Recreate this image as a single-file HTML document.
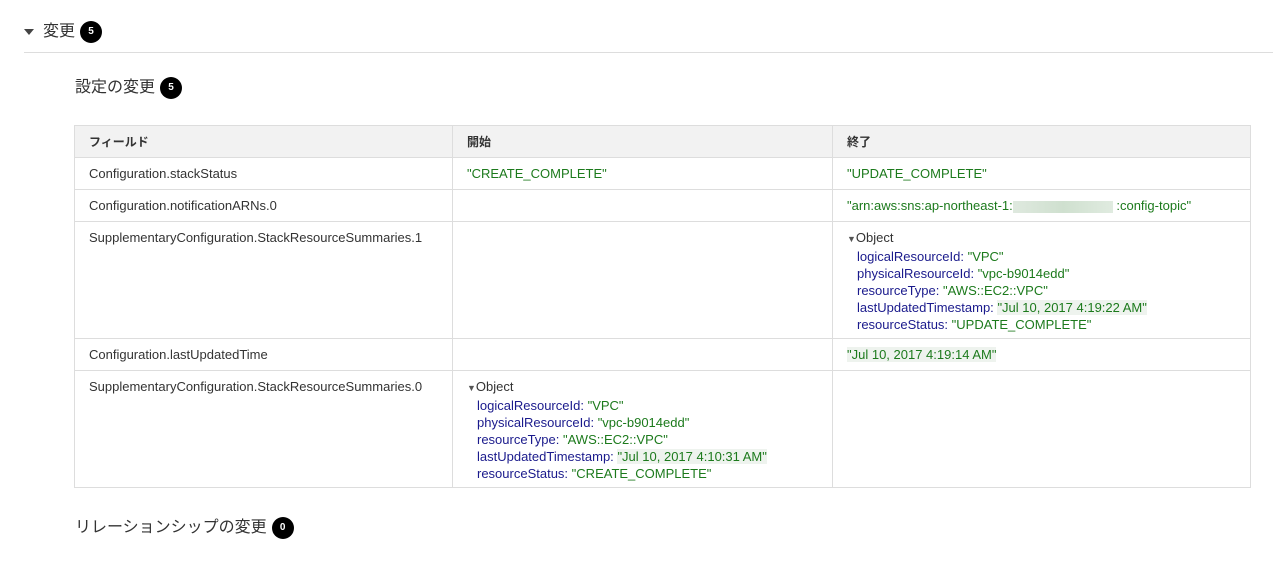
<!DOCTYPE html>
<html><head><meta charset="utf-8"><style>
body{margin:0;background:#fff;font-family:"Liberation Sans","Noto Sans CJK JP",sans-serif;color:#333;width:1273px;height:562px;overflow:hidden;position:relative}
.badge{display:inline-block;width:22px;height:22px;border-radius:50%;background:#000;color:#fff;font-size:10px;font-weight:bold;text-align:center;line-height:22px;vertical-align:middle;margin-left:5px}
.h1{position:absolute;left:24px;top:17px;font-size:16px;color:#333}
.tri{display:inline-block;width:0;height:0;border-left:5px solid transparent;border-right:5px solid transparent;border-top:6px solid #444;vertical-align:middle;margin-right:9px}
.line{position:absolute;left:24px;right:0;top:52px;border-top:1px solid #ddd}
.h2{position:absolute;left:75px;top:73px;font-size:16px}
.h3{position:absolute;left:75px;top:513px;font-size:16px}
table{position:absolute;left:74px;top:125px;width:1177px;border-collapse:collapse;font-size:13px}
td,th{border:1px solid #ddd;padding:0 14px;vertical-align:top;text-align:left}
th{background:#f2f2f2;height:31px;font-weight:bold;vertical-align:middle;font-size:12px;color:#333}
td{padding-top:8px}
.s{color:#1c7a1c}
.k{color:#1a1a8c}
.o{line-height:17px;padding-top:7px}
.o .t{font-size:9px;color:#555}
.o div{padding-left:10px}
.hl{background:#eef3ee}
.blur{display:inline-block;width:100px;height:12px;background:linear-gradient(90deg,#dfe9df,#cfe0cf,#e0ebe0);vertical-align:middle}
</style></head><body>
<div class="h1"><span class="tri"></span>変更<span class="badge">5</span></div>
<div class="line"></div>
<div class="h2">設定の変更<span class="badge">5</span></div>
<table>
<tr><th style="width:349px">フィールド</th><th style="width:351px">開始</th><th>終了</th></tr>
<tr style="height:32px"><td>Configuration.stackStatus</td><td class="s">"CREATE_COMPLETE"</td><td class="s">"UPDATE_COMPLETE"</td></tr>
<tr style="height:32px"><td>Configuration.notificationARNs.0</td><td></td><td class="s">"arn:aws:sns:ap-northeast-1:<span class="blur"></span> :config-topic"</td></tr>
<tr style="height:117px"><td>SupplementaryConfiguration.StackResourceSummaries.1</td><td></td><td class="o"><span class="t">▼</span>Object
<div><span class="k">logicalResourceId:</span> <span class="s">"VPC"</span></div>
<div><span class="k">physicalResourceId:</span> <span class="s">"vpc-b9014edd"</span></div>
<div><span class="k">resourceType:</span> <span class="s">"AWS::EC2::VPC"</span></div>
<div><span class="k">lastUpdatedTimestamp:</span> <span class="s hl">"Jul 10, 2017 4:19:22 AM"</span></div>
<div><span class="k">resourceStatus:</span> <span class="s">"UPDATE_COMPLETE"</span></div></td></tr>
<tr style="height:32px"><td>Configuration.lastUpdatedTime</td><td></td><td><span class="s hl">"Jul 10, 2017 4:19:14 AM"</span></td></tr>
<tr style="height:117px"><td>SupplementaryConfiguration.StackResourceSummaries.0</td><td class="o"><span class="t">▼</span>Object
<div><span class="k">logicalResourceId:</span> <span class="s">"VPC"</span></div>
<div><span class="k">physicalResourceId:</span> <span class="s">"vpc-b9014edd"</span></div>
<div><span class="k">resourceType:</span> <span class="s">"AWS::EC2::VPC"</span></div>
<div><span class="k">lastUpdatedTimestamp:</span> <span class="s hl">"Jul 10, 2017 4:10:31 AM"</span></div>
<div><span class="k">resourceStatus:</span> <span class="s">"CREATE_COMPLETE"</span></div></td><td></td></tr>
</table>
<div class="h3">リレーションシップの変更<span class="badge">0</span></div>
</body></html>
